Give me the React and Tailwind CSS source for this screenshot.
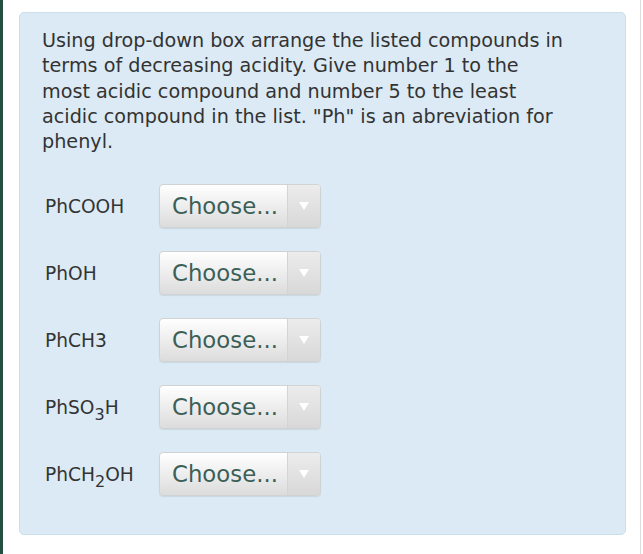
const compounds = [
  { id: "a", label: <>PhCOOH</> },
  { id: "b", label: <>PhOH</> },
  { id: "c", label: <>PhCH3</> },
  { id: "d", label: <>PhSO<sub className="top-[6px] text-[16px]">3</sub>H</> },
  { id: "e", label: <>PhCH<sub className="top-[6px] text-[16px]">2</sub>OH</> },
];

const ChooseBox = () => (
  <div className="flex h-[44px] w-[162px] overflow-hidden rounded-[4px] border border-[#cfd3d4] bg-gradient-to-b from-white to-[#dcdcdc] shadow-[0_1px_1px_rgba(0,0,0,0.08)]">
    <div className="flex flex-1 items-center pl-[12px] text-[22.8px] text-[#3b5f56]">
      Choose...
    </div>
    <div className="flex w-[33px] items-center justify-center border-l border-[#d4d4d4] bg-gradient-to-b from-[#ececec] to-[#d8d8d8]">
      <svg width="10" height="8" viewBox="0 0 10 8">
        <path d="M0 0 H10 L5 8 Z" fill="#ffffff" />
      </svg>
    </div>
  </div>
);

const App = () => {
  return (
    <div className="flex h-[554px] w-[643px] bg-white font-['DejaVu_Sans',Verdana,sans-serif]">
      <div className="w-[3px] bg-[#21503f]" />
      <div className="flex flex-1 pl-[16px] pr-[14px] pt-[12px] pb-[19px]">
        <div className="flex-1 rounded-[5px] border border-[#cbdfea] bg-[#dbeaf4] pl-[22px] pr-[10px] pt-[15px]">
          <p className="w-[527px] text-[19.2px] leading-[25.3px] text-[#333333]">
            Using drop-down box arrange the listed compounds in terms of
            decreasing acidity. Give number 1 to the most acidic compound and
            number 5 to the least acidic compound in the list. "Ph" is an
            abreviation for phenyl.
          </p>
          <div className="mt-[30px] flex flex-col gap-[23px]">
            {compounds.map((c) => (
              <div key={c.id} className="flex items-center">
                <div className="w-[117px] pl-[3px] text-[18.6px] text-[#333333]">
                  {c.label}
                </div>
                <ChooseBox />
              </div>
            ))}
          </div>
        </div>
      </div>
      <div className="w-[1px] bg-[#dddddd]" />
      <div className="w-[2px]" />
    </div>
  );
};

export default App;
